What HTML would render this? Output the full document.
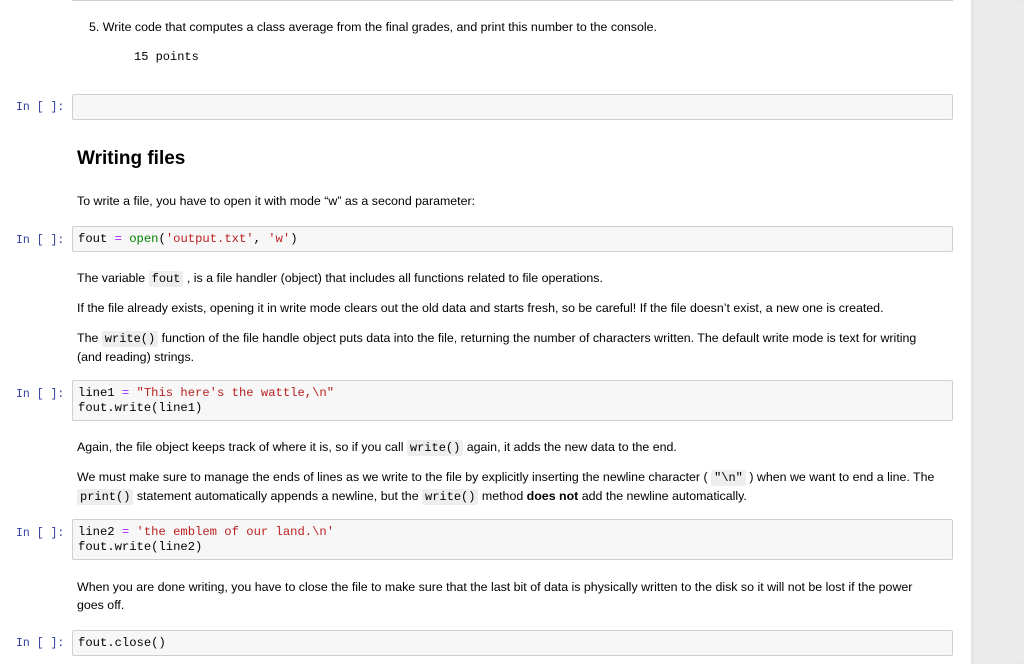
<!DOCTYPE html>
<html><head><meta charset="utf-8"><style>
body{margin:0;width:1024px;height:664px;background:#fff;position:relative;overflow:hidden;font-family:"Liberation Sans",Arial,sans-serif;font-size:12.4px;color:#000}
.side{position:absolute;left:971px;top:0;width:53px;height:664px;background:#ebebeb;box-shadow:inset 2px 0 2px #e0e0e0}
.a{position:absolute}
.p{position:absolute;left:16px;font-family:"Liberation Mono",monospace;font-size:11.5px;color:#303f9f}
.c{position:absolute;left:72px;width:881px;background:#f7f7f7;border:1px solid #cfcfcf;border-radius:2px;font-family:"Liberation Mono",monospace;font-size:12.2px;padding:0 5px;box-sizing:border-box;line-height:15px}
.t{position:absolute;left:77px;width:860px;line-height:18px}
code{font-family:"Liberation Mono",monospace;font-size:12px;background:#eee;padding:1px 3px;border-radius:2px}
.s{color:#ba2121}.o{color:#aa22ff}.g{color:#008000}
</style></head><body>
<div class="a" style="left:72px;top:0;width:881px;height:1px;background:#cfcfcf"></div>
<div class="side"></div>
<div class="t" style="left:89px;top:18px">5. Write code that computes a class average from the final grades, and print this number to the console.</div>
<div class="a" style="left:134px;top:50px;font-family:'Liberation Mono',monospace;font-size:12px">15 points</div>
<div class="p" style="top:101px">In [ ]:</div>
<div class="c" style="top:94px;height:26px"></div>
<div class="a" style="left:77px;top:148px;font-size:19px;font-weight:bold">Writing files</div>
<div class="t" style="top:192px">To write a file, you have to open it with mode “w” as a second parameter:</div>
<div class="p" style="top:234px">In [ ]:</div>
<div class="c" style="top:226px;height:26px;padding-top:5px">fout <span class="o">=</span> <span class="g">open</span>(<span class="s">'output.txt'</span>, <span class="s">'w'</span>)</div>
<div class="t" style="top:269px">The variable <code>fout</code> , is a file handler (object) that includes all functions related to file operations.</div>
<div class="t" style="top:299px">If the file already exists, opening it in write mode clears out the old data and starts fresh, so be careful! If the file doesn’t exist, a new one is created.</div>
<div class="t" style="top:329px">The <code>write()</code> function of the file handle object puts data into the file, returning the number of characters written. The default write mode is text for writing (and reading) strings.</div>
<div class="p" style="top:388px">In [ ]:</div>
<div class="c" style="top:380px;height:41px;padding-top:5px">line1 <span class="o">=</span> <span class="s">"This here's the wattle,\n"</span><br>fout.write(line1)</div>
<div class="t" style="top:438px">Again, the file object keeps track of where it is, so if you call <code>write()</code> again, it adds the new data to the end.</div>
<div class="t" style="top:468px">We must make sure to manage the ends of lines as we write to the file by explicitly inserting the newline character ( <code>"\n"</code> ) when we want to end a line. The <code>print()</code> statement automatically appends a newline, but the <code>write()</code> method <b>does not</b> add the newline automatically.</div>
<div class="p" style="top:527px">In [ ]:</div>
<div class="c" style="top:519px;height:41px;padding-top:5px">line2 <span class="o">=</span> <span class="s">'the emblem of our land.\n'</span><br>fout.write(line2)</div>
<div class="t" style="top:578px">When you are done writing, you have to close the file to make sure that the last bit of data is physically written to the disk so it will not be lost if the power goes off.</div>
<div class="p" style="top:637px">In [ ]:</div>
<div class="c" style="top:630px;height:26px;padding-top:5px">fout.close()</div>
</body></html>
